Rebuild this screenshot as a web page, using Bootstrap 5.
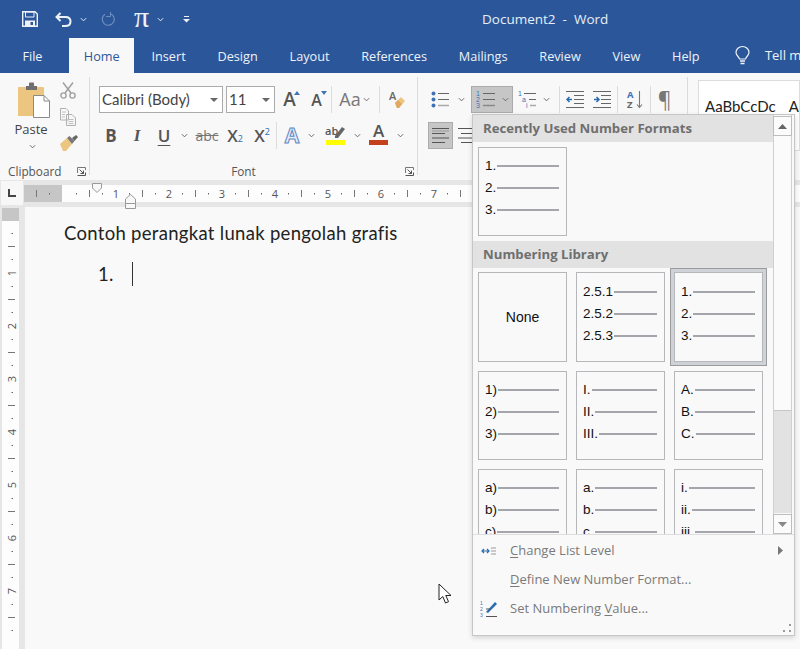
<!doctype html>
<html lang="en">
<head>
<meta charset="utf-8">
<title>Document2 - Word</title>
<link rel="stylesheet" href="https://cdn.jsdelivr.net/npm/bootstrap@5.3.0/dist/css/bootstrap.min.css">
<style>
html,body{height:649px;overflow:hidden}
body{background:#f9f9f9;font-family:"Open Sans","Noto Sans",sans-serif;font-size:13px;color:#444;position:relative}
svg{display:block;flex:none;overflow:visible}
.title-bar{height:38px;background:#2b579a;color:#e8eef7;padding-left:22px}
.q1{margin-left:17px}.q2{margin-left:8px}.q3{margin-left:14px}.q4{margin-left:19px;width:15px}.q5{margin-left:8px}.q6{margin-left:19px}
.pi{font:30px/1 "Liberation Serif",serif;color:#eef2f8;margin-top:-5px}
.doc-title{margin-left:292px;font-size:13.5px;white-space:pre}
.tab-bar{height:35px;background:#2b579a;padding-left:8px;gap:3px}
.tab-bar .nav-link{height:35px;padding:0 14.4px;color:#eef2f8;font-size:12.7px;line-height:36px;white-space:nowrap}
.tab-bar .nav-link.active{background:#f8f8f8;color:#2b579a}
.tab-bar .file-tab{margin-right:9.6px}
.tell{color:#eef2f8;white-space:nowrap;font-size:13px;margin-left:18px;gap:15px}
.ribbon{height:107px;background:#f8f8f8;padding-top:4px}
.grp{height:98px;border-right:1px solid #dcdcdc;position:relative;flex:none}
.g-clip{width:90px}.g-font{width:328px;padding-left:9px}.g-para{width:270px}
.grp-label{position:absolute;left:0;right:0;top:86px;line-height:16px;font-size:11.8px;color:#555;text-align:center}
.g-font .grp-label{padding-right:20px}
.launch{position:absolute;top:90px;right:3px}
.paste-col{padding:5px 0 0 18px;width:60px}
.paste-label{margin:2px 0 0 -6px;width:38px;text-align:center;font-size:13px;line-height:18px;color:#444}
.paste-chev{margin:6px 0 0 11px}
.clip-col{padding-top:5px;width:22px;gap:9px}
.row-a{height:27px;margin-top:9px}
.row-b{height:27px;margin-top:9px}
.sel-font,.sel-size{height:27px;border:1px solid #ababab;border-radius:0;background:#fff;padding:0 4px 0 2px;font:15px/25px "Lato",sans-serif;color:#444;flex:none;justify-content:space-between}
.sel-font{width:124px}.sel-size{width:49px;margin-left:3px}
.tri{width:0;height:0;border:4px solid transparent;border-top-color:#666;border-bottom:0}
.vsep{width:1px;height:27px;background:#dcdcdc;flex:none}
.cell{display:flex;align-items:center;justify-content:center;height:27px;flex:none;position:relative;color:#555}
.grow{width:15px;margin-left:7px;font-size:19px;font-weight:600}
.shrink{width:15px;margin-left:12px;font-size:16px;font-weight:600}
.gs-tri{position:absolute;top:5px;right:-3px}
.ms7{margin-left:7px}.ms8{margin-left:8px}.ms10{margin-left:10px}.ms6{margin-left:6px}.ms5{margin-left:5px}.ms3{margin-left:3px}.ms2{margin-left:2px}.ms4{margin-left:4px}.ms9{margin-left:9px}
.aa{width:22px;font-size:18px;color:#777}
.w13{width:24px}.f-b{font-size:17px;font-weight:700}.f-i{font-size:17px;font-style:italic;font-weight:600;font-family:"Liberation Serif",serif}
.f-u{font-size:17px;font-weight:600;text-decoration:underline;text-underline-offset:3px}
.f-s{font-size:14px;color:#777;text-decoration:line-through}
.f-x{font-size:17px;font-weight:600}
.f-x small{font-size:9px;color:#2b6cb0;font-weight:400}
.sub{align-self:flex-end;margin-bottom:4px}.sup{align-self:flex-start;margin-top:3px}
.a-fx{width:20px;font-size:21px;font-weight:700;color:#e8eef8;-webkit-text-stroke:1px #5d87c4}
.a-col{width:21px;flex-direction:column;justify-content:flex-start}
.a-col b{font-size:17px;font-weight:600;line-height:18px;height:18px;color:#555}
.a-col .ab{font-size:11px;line-height:18px;height:18px;color:#555;align-self:flex-start;font-weight:600}
.bar{height:5px;width:19px;flex:none}
.b-y{background:#ffff00}.b-r{background:#c5411c}
.pen{position:absolute;top:4px;right:0}
.btn-on{background:#c6c6c6;border:1px solid #ababab;height:27px;flex:none;display:flex;align-items:center}
.num-btn{width:42px;padding-left:4px;gap:5px;margin-left:6px}
.align-btn{width:25px;justify-content:center;margin-left:10px}
.pil{width:13px;font-size:21px;color:#777}
.para-top{padding-left:13px}
.styles-box{margin:3px 0 0 10px;width:110px;height:71px;background:#fff;border:1px solid #dcdcdc;padding:15px 0 0 6px;font:15px/20px "Lato",sans-serif;color:#222;white-space:nowrap;overflow:hidden}
.styles-box span{margin-right:13px}
.ruler-bar{height:27px;background:#e6e6e6}
.l-box{width:24px;height:27px;padding:1px 1px 2px 1px}
.l-in{background:#f7f7f7;height:24px;display:flex;align-items:center;justify-content:center;width:22px}
.ruler-svg text,.vruler text{font:11px "Open Sans",sans-serif;fill:#555}
.vruler{background:#e6e6e6;width:25px;height:442px;flex:none}
.page{padding:14px 0 0 39px;font-family:"Lato",sans-serif;font-size:18.5px;letter-spacing:.3px;color:#222;flex:1}
.page-line{line-height:24px}
.page-list{margin:17px 0 0 34px;height:24px;line-height:24px;gap:18px}
.caret-bar{width:1px;height:24px;background:#333;flex:none}
.pointer{position:absolute;left:438px;top:583px;z-index:1100}
.dropdown-menu.num-menu{top:114px;left:472px;width:323px;height:522px;padding:0;border:1px solid #c6c6c6;border-radius:0;background:#f9f9f9;box-shadow:0 2px 5px rgba(0,0,0,.15);font-size:13px;min-width:0;margin:0}
.gal-wrap{height:419px;overflow:hidden}
.gal{width:300px;flex:none}
.gal .dropdown-header{background:#e2e2e2;color:#6f6f6f;font-weight:700;font-size:13.2px;line-height:27px;height:27px;padding:0 0 0 10px;white-space:nowrap}
.gal-grid{display:grid;grid-template-columns:repeat(3,89px);gap:9px;padding:5px 0 5px 5px}
.gal-grid.lib{padding-top:4px}
.gi{height:89px;border:1px solid #b5b7bb;padding:7px 7px 0 6px;font:13.5px/22px "Liberation Sans",sans-serif;color:#111}
.lib .gi:nth-child(-n+3){height:90px;padding-top:8px}
.gi-r{height:22px;display:flex;align-items:center;gap:1px;white-space:nowrap}
.gi-r i{flex:1;height:2px;background:#a4a6ab;display:block}
.lib .gi.gi-none{font-size:14px;display:flex;align-items:center;justify-content:center;padding:0}
.gi-sel{box-shadow:0 0 0 3px #cfd2d6,0 0 0 4px #9c9c9c}
.sb{width:19px;flex:none;border-left:1px solid #d0d0d0;border-right:1px solid #d0d0d0}
.sb-btn{height:20px;background:#fbfbfb;border:1px solid #bdbdbd;margin:1px -1px 0;display:flex;align-items:center;justify-content:center;flex:none}
.sb-thumb{height:275px;flex:none;border-bottom:1px solid #c6c6c6;background:#fbfbfb}
.sb-track{flex:1;background:#e2e2e2}
.menu-list{border-top:1px solid #dedede;padding-top:1px}
.num-menu .dropdown-item{height:29px;padding:0;color:#7a7a7a;font-size:13px;display:flex;align-items:center}
.mi-ic{width:37px;display:flex;justify-content:center;flex:none;padding-right:6px}
.num-menu u{text-underline-offset:2px}
.mi-arrow{margin-left:auto;margin-right:11px}
.grip{position:absolute;right:3px;bottom:3px}
</style>
</head>
<body>
<svg width="0" height="0" class="position-absolute">
<symbol id="chev" viewBox="0 0 8 5"><path d="M1 1l3 3 3-3" fill="none" stroke="#666" stroke-width="1.1"/></symbol>
<symbol id="lnch" viewBox="0 0 9 9"><path d="M.5 6V.5H8.5V3" fill="none" stroke="#777"/><path d="M.5 8.5H8.5V5.5M2.5 2.5l4 4M6.5 3.5v3h-3" fill="none" stroke="#555"/></symbol>
</svg>

<header class="title-bar d-flex align-items-center">
<svg width="16" height="16" viewBox="0 0 16 16"><path d="M.7.7H13L15.3 3V15.3H.7Z" fill="none" stroke="#eef2f8" stroke-width="1.4"/><path d="M3.500 1H12V6H3.500Z" fill="none" stroke="#eef2f8"/><path d="M3 9.500H13V15H3Z" fill="#eef2f8"/><path d="M8.500 11H11V14H8.500Z" fill="#2b579a"/></svg>
<svg class="q1" width="17" height="15" viewBox="0 0 17 15"><path d="M5.500 1 1.500 5l4 4" fill="none" stroke="#eef2f8" stroke-width="2"/><path d="M2 5H10.500C14 5 15.500 7 15.500 9.500S13.500 14 10 14H7" fill="none" stroke="#eef2f8" stroke-width="2"/></svg>
<svg class="q2" width="7" height="5" viewBox="0 0 8 5"><path d="M1 1l3 3 3-3" fill="none" stroke="#eef2f8" stroke-width="1.1"/></svg>
<svg class="q3" width="14" height="14" viewBox="0 0 14 14"><path d="M9 1.500A6 6 0 1 1 4 2.200" fill="none" stroke="#6d8dbd" stroke-width="1.2"/><path d="M9.500 0v4.500H5" fill="none" stroke="#6d8dbd"/></svg>
<div class="pi q4">π</div>
<svg class="q5" width="7" height="5" viewBox="0 0 8 5"><path d="M1 1l3 3 3-3" fill="none" stroke="#eef2f8" stroke-width="1.1"/></svg>
<svg class="q6" width="7" height="7" viewBox="0 0 7 7"><path d="M1 .5H6" stroke="#eef2f8"/><path d="M0 3H7L3.500 6.500Z" fill="#eef2f8"/></svg>
<div class="doc-title">Document2  -  Word</div>
</header>

<ul class="nav tab-bar flex-nowrap overflow-hidden">
<li class="nav-item file-tab"><a class="nav-link" href="#">File</a></li>
<li class="nav-item"><a class="nav-link active" href="#">Home</a></li>
<li class="nav-item"><a class="nav-link" href="#">Insert</a></li>
<li class="nav-item"><a class="nav-link" href="#">Design</a></li>
<li class="nav-item"><a class="nav-link" href="#">Layout</a></li>
<li class="nav-item"><a class="nav-link" href="#">References</a></li>
<li class="nav-item"><a class="nav-link" href="#">Mailings</a></li>
<li class="nav-item"><a class="nav-link" href="#">Review</a></li>
<li class="nav-item"><a class="nav-link" href="#">View</a></li>
<li class="nav-item"><a class="nav-link" href="#">Help</a></li>
<li class="nav-item tell d-flex align-items-center">
<svg width="15" height="19" viewBox="0 0 15 19"><path d="M4.500 13C4 10.500 1 9.500 1 6.500A6.500 6 0 0 1 14 6.500C14 9.500 11 10.500 10.500 13Z" fill="none" stroke="#eef2f8" stroke-width="1.2"/><path d="M5 15H10M5.500 17.500H9.500" stroke="#eef2f8" stroke-width="1.300"/></svg>
<span>Tell me</span></li>
</ul>

<section class="ribbon d-flex">
<div class="grp g-clip d-flex">
<div class="paste-col">
<svg width="32" height="36" viewBox="0 0 32 36"><rect y="5" width="26" height="29" rx="1" fill="#ecc680"/><path d="M8 4H11V1.500A1 1 0 0 1 12 .5H15A1 1 0 0 1 16 1.500V4H19V8H8Z" fill="#6f6f6f"/><path d="M15.500 13.500H26L31.500 19V35.500H15.500Z" fill="#fff" stroke="#8a8a8a"/><path d="M26 13.500V19H31.500" fill="none" stroke="#8a8a8a"/></svg>
<div class="paste-label">Paste</div>
<svg class="paste-chev" width="7" height="5"><use href="#chev"/></svg>
</div>
<div class="clip-col d-flex flex-column">
<svg width="16" height="17" viewBox="0 0 16 17"><path d="M3 .5 11 11M13 .5 5 11" stroke="#a0a0a0" stroke-width="1.500"/><circle cx="3.500" cy="13.500" r="2.600" fill="none" stroke="#a0a0a0" stroke-width="1.400"/><circle cx="12.500" cy="13.500" r="2.600" fill="none" stroke="#a0a0a0" stroke-width="1.400"/></svg>
<svg width="16" height="18" viewBox="0 0 16 18"><path d="M.5.500H6L8.500 3V12H.5ZM6.500 6.500H12L15.500 10V17.500H6.500Z" fill="#f8f8f8" stroke="#b0b0b0"/><path d="M2 4H6M2 6.500H5M2 9H5M8.500 11.500H13.500M8.500 13.500H13.500M8.500 15.500H13.500" stroke="#c0c0c0"/></svg>
<svg width="18" height="16" viewBox="0 0 18 16"><path d="M0 9 7 3 12 9 6 16H3Z" fill="#ecc680"/><path d="M7 3 9.500 1 14.500 6 12 9Z" fill="#777"/><path d="M12 3 16 0 18 2 14.500 6Z" fill="#666"/></svg>
</div>
<div class="grp-label text-start ps-2">Clipboard</div>
<svg class="launch" width="9" height="9"><use href="#lnch"/></svg>
</div>

<div class="grp g-font">
<div class="row-a d-flex">
<div class="sel-font d-flex align-items-center"><span>Calibri (Body)</span><span class="tri"></span></div>
<div class="sel-size d-flex align-items-center"><span>11</span><span class="tri"></span></div>
<div class="cell grow">A<svg class="gs-tri" width="6" height="4"><path d="M0 4H6L3 0Z" fill="#3f73b5"/></svg></div>
<div class="cell shrink">A<svg class="gs-tri" width="6" height="4"><path d="M0 0H6L3 4Z" fill="#3f73b5"/></svg></div>
<div class="vsep ms7"></div>
<div class="cell aa ms7">Aa</div>
<svg class="ms2 align-self-center" width="7" height="5"><use href="#chev"/></svg>
<div class="vsep ms9"></div>
<div class="cell ms9"><svg width="16" height="19" viewBox="0 0 16 19"><text x="0" y="10" font-size="11" font-weight="600" fill="#666" font-family="Open Sans">A</text><path d="M6 13 12 7 16 11 10 18H8Z" fill="#ecc680"/><path d="M6 13 9 10 13 14 10 18H8Z" fill="#e0a860"/></svg></div>
</div>
<div class="row-b d-flex">
<div class="cell w13 f-b">B</div>
<div class="cell w13 ms2 f-i">I</div>
<div class="cell w13 ms3 f-u">U</div>
<svg class="ms5 align-self-center" width="7" height="5"><use href="#chev"/></svg>
<div class="cell w13 ms7 f-s">abc</div>
<div class="cell w13 ms4 f-x">X<small class="sub">2</small></div>
<div class="cell w13 ms3 f-x">X<small class="sup">2</small></div>
<div class="vsep ms2"></div>
<div class="cell a-fx ms5">A</div>
<svg class="ms6 align-self-center" width="7" height="5"><use href="#chev"/></svg>
<div class="cell a-col ms10"><span class="ab">ab</span><svg class="pen" width="11" height="12" viewBox="0 0 11 12"><path d="M0 10 7 1 10 3 3 12H0Z" fill="#666"/></svg><span class="bar b-y"></span></div>
<svg class="ms8 align-self-center" width="7" height="5"><use href="#chev"/></svg>
<div class="cell a-col ms7"><b>A</b><span class="bar b-r"></span></div>
<svg class="ms8 align-self-center" width="7" height="5"><use href="#chev"/></svg>
</div>
<div class="grp-label">Font</div>
<svg class="launch" width="9" height="9"><use href="#lnch"/></svg>
</div>

<div class="grp g-para">
<div class="row-a d-flex align-items-center para-top">
<svg width="19" height="17" viewBox="0 0 19 17"><circle cx="2.500" cy="2.500" r="2" fill="#3f73b5"/><circle cx="2.500" cy="8.500" r="2" fill="#3f73b5"/><circle cx="2.500" cy="14.500" r="2" fill="#3f73b5"/><path d="M7 2.500H18M7 8.500H18" stroke="#666"/><path d="M7 14.500H18" stroke="#aaa" stroke-width="1.500"/></svg>
<svg class="ms8" width="7" height="5"><use href="#chev"/></svg>
<div class="btn-on num-btn"><svg width="21" height="19" viewBox="0 0 21 19"><text x="0" y="6" font-size="7" fill="#3f73b5" font-family="Liberation Sans">1</text><text x="0" y="12" font-size="7" fill="#3f73b5" font-family="Liberation Sans">2</text><text x="0" y="18" font-size="7" fill="#3f73b5" font-family="Liberation Sans">3</text><path d="M7 3.500H19M7 9.500H19" stroke="#666"/><path d="M7 15.500H19" stroke="#888" stroke-width="1.500"/></svg><svg width="7" height="5"><use href="#chev"/></svg></div>
<svg class="ms5" width="19" height="19" viewBox="0 0 19 19"><text x="0" y="6" font-size="7" fill="#3f73b5" font-family="Liberation Sans">1</text><text x="4" y="12" font-size="7" fill="#3f73b5" font-family="Liberation Sans">a</text><text x="8" y="18" font-size="7" fill="#3f73b5" font-family="Liberation Sans">i</text><path d="M6 3.500H18M11 9.500H18" stroke="#666"/><path d="M12 15.500H18" stroke="#aaa" stroke-width="1.500"/></svg>
<svg class="ms6" width="7" height="5"><use href="#chev"/></svg>
<div class="vsep ms9"></div>
<svg class="ms6" width="18" height="17" viewBox="0 0 18 17"><path d="M0 .5H18M8 4.500H18M8 8.500H18M8 12.500H18M0 16.500H18" stroke="#666"/><path d="M6 8.500H1M3.500 6 1 8.500 3.500 11" fill="none" stroke="#2b6cb0" stroke-width="1.500"/></svg>
<svg class="ms9" width="18" height="17" viewBox="0 0 18 17"><path d="M0 .5H18M8 4.500H18M8 8.500H18M8 12.500H18M0 16.500H18" stroke="#666"/><path d="M1 8.500H6M3.500 6 6 8.500 3.500 11" fill="none" stroke="#2b6cb0" stroke-width="1.500"/></svg>
<div class="vsep ms6"></div>
<svg class="ms9" width="16" height="19" viewBox="0 0 16 19"><text x="0" y="8" font-size="9.500" font-weight="700" fill="#3f73b5" font-family="Open Sans">A</text><text x="0" y="18" font-size="9.500" font-weight="700" fill="#666" font-family="Open Sans">Z</text><path d="M12.500 1V17M10 14.500 12.500 17.500 15 14.500" fill="none" stroke="#777" stroke-width="1.100"/></svg>
<div class="vsep ms7"></div>
<div class="cell pil ms7">¶</div>
</div>
<div class="row-b d-flex align-items-center">
<div class="btn-on align-btn"><svg width="17" height="17" viewBox="0 0 17 17"><path d="M0 1.500H17M0 6.500H13M0 11H17M0 15.500H13" stroke="#555" stroke-width="1.200"/><path d="M0 4H17" stroke="#999"/></svg></div>
<svg class="ms5" width="17" height="17" viewBox="0 0 17 17"><path d="M0 1.500H17M3 6.500H14M0 11H17M3 15.500H14" stroke="#555" stroke-width="1.200"/></svg>
</div>
</div>

<div class="styles-box"><span>AaBbCcDc</span><span>AaBbCcDc</span></div>
</section>

<section class="ruler-bar d-flex">
<div class="l-box"><div class="l-in"><svg width="8" height="8" viewBox="0 0 8 8"><path d="M0 0H2V6H8V8H0Z" fill="#444"/></svg></div></div>
<svg class="ruler-svg" width="776" height="27" viewBox="24 0 776 27">
<rect x="24" y="5" width="38" height="17" fill="#c6c6c6"/><rect x="62" y="5" width="738" height="17" fill="#fdfdfd"/>
<path d="M36.500 10v7M89.500 10v7M142.500 10v7M195.500 10v7M248.500 10v7M301.500 10v7M354.500 10v7M407.500 10v7M460.500 10v7" stroke="#777"/>
<path d="M49.500 13v1.500M76.500 13v1.500M102.500 13v1.500M129.500 13v1.500M155.500 13v1.500M182.500 13v1.500M208.500 13v1.500M235.500 13v1.500M261.500 13v1.500M288.500 13v1.500M314.500 13v1.500M341.500 13v1.500M367.500 13v1.500M394.500 13v1.500M420.500 13v1.500M447.500 13v1.500" stroke="#666"/>
<text x="116" y="18" text-anchor="middle">1</text><text x="169" y="18" text-anchor="middle">2</text><text x="222" y="18" text-anchor="middle">3</text><text x="275" y="18" text-anchor="middle">4</text><text x="328" y="18" text-anchor="middle">5</text><text x="381" y="18" text-anchor="middle">6</text><text x="434" y="18" text-anchor="middle">7</text>
<path d="M92.500 3.500H101.500V8L97 12.500 92.500 8Z" fill="#f8f8f8" stroke="#999"/>
<path d="M130.500 14.500 135.500 19V23.500H125.500V19Z" fill="#f8f8f8" stroke="#999"/><path d="M125.500 23.500H135.500V28.500H125.500Z" fill="#f8f8f8" stroke="#999"/>
</svg>
</section>

<main class="d-flex">
<svg class="vruler" width="25" height="442" viewBox="0 207 25 442">
<rect x="2" y="208" width="17" height="13" fill="#c6c6c6"/><rect x="2" y="221" width="17" height="428" fill="#fdfdfd"/>
<path d="M8 246.500h7M8 299.500h7M8 352.500h7M8 405.500h7M8 458.500h7M8 511.500h7M8 564.500h7M8 617.500h7" stroke="#777"/>
<path d="M11.500 233.500h1.500M11.500 259.500h1.500M11.500 286.500h1.500M11.500 312.500h1.500M11.500 339.500h1.500M11.500 365.500h1.500M11.500 392.500h1.500M11.500 418.500h1.500M11.500 445.500h1.500M11.500 471.500h1.500M11.500 498.500h1.500M11.500 524.500h1.500M11.500 551.500h1.500M11.500 577.500h1.500M11.500 604.500h1.500M11.500 630.500h1.500" stroke="#666"/>
<text transform="rotate(-90 16 273)" x="16" y="273" text-anchor="middle">1</text><text transform="rotate(-90 16 326)" x="16" y="326" text-anchor="middle">2</text><text transform="rotate(-90 16 379)" x="16" y="379" text-anchor="middle">3</text><text transform="rotate(-90 16 432)" x="16" y="432" text-anchor="middle">4</text><text transform="rotate(-90 16 485)" x="16" y="485" text-anchor="middle">5</text><text transform="rotate(-90 16 538)" x="16" y="538" text-anchor="middle">6</text><text transform="rotate(-90 16 591)" x="16" y="591" text-anchor="middle">7</text>
</svg>
<div class="page">
<div class="page-line">Contoh perangkat lunak pengolah grafis</div>
<div class="page-list d-flex"><span>1.</span><span class="caret-bar"></span></div>
</div>
</main>

<div class="dropdown-menu show num-menu">
<div class="gal-wrap d-flex">
<div class="gal">
<h6 class="dropdown-header">Recently Used Number Formats</h6>
<div class="gal-grid">
<div class="gi"><div class="gi-r">1.<i></i></div><div class="gi-r">2.<i></i></div><div class="gi-r">3.<i></i></div></div>
</div>
<h6 class="dropdown-header">Numbering Library</h6>
<div class="gal-grid lib">
<div class="gi gi-none">None</div>
<div class="gi"><div class="gi-r">2.5.1<i></i></div><div class="gi-r">2.5.2<i></i></div><div class="gi-r">2.5.3<i></i></div></div>
<div class="gi gi-sel"><div class="gi-r">1.<i></i></div><div class="gi-r">2.<i></i></div><div class="gi-r">3.<i></i></div></div>
<div class="gi"><div class="gi-r">1)<i></i></div><div class="gi-r">2)<i></i></div><div class="gi-r">3)<i></i></div></div>
<div class="gi"><div class="gi-r">I.<i></i></div><div class="gi-r">II.<i></i></div><div class="gi-r">III.<i></i></div></div>
<div class="gi"><div class="gi-r">A.<i></i></div><div class="gi-r">B.<i></i></div><div class="gi-r">C.<i></i></div></div>
<div class="gi"><div class="gi-r">a)<i></i></div><div class="gi-r">b)<i></i></div><div class="gi-r">c)<i></i></div></div>
<div class="gi"><div class="gi-r">a.<i></i></div><div class="gi-r">b.<i></i></div><div class="gi-r">c.<i></i></div></div>
<div class="gi"><div class="gi-r">i.<i></i></div><div class="gi-r">ii.<i></i></div><div class="gi-r">iii.<i></i></div></div>
</div>
</div>
<div class="sb d-flex flex-column">
<div class="sb-btn"><svg width="9" height="5"><path d="M0 5H9L4.500 0Z" fill="#666"/></svg></div>
<div class="sb-thumb"></div>
<div class="sb-track"></div>
<div class="sb-btn"><svg width="9" height="5"><path d="M0 0H9L4.500 5Z" fill="#888"/></svg></div>
</div>
</div>
<div class="menu-list">
<a class="dropdown-item" href="#"><span class="mi-ic"><svg width="14" height="8" viewBox="0 0 14 8"><path d="M9 1H14M9 4H14M9 7H14" stroke="#999"/><path d="M0 4H7M2 2 0 4 2 6M5 2 7 4 5 6" fill="none" stroke="#2b6cb0" stroke-width="1.200"/></svg></span><span><u>C</u>hange List Level</span><svg class="mi-arrow" width="5" height="9"><path d="M0 0V9L5 4.500Z" fill="#777"/></svg></a>
<a class="dropdown-item" href="#"><span class="mi-ic"></span><span><u>D</u>efine New Number Format...</span></a>
<a class="dropdown-item" href="#"><span class="mi-ic"><svg width="18" height="18" viewBox="0 0 18 18"><text x="0" y="5" font-size="5" fill="#3f73b5" font-family="Liberation Sans">1</text><text x="0" y="11" font-size="5" fill="#3f73b5" font-family="Liberation Sans">2</text><text x="0" y="17" font-size="5" fill="#3f73b5" font-family="Liberation Sans">3</text><path d="M6 12 15 2 17 4 8 13Z" fill="#2b6cb0"/><path d="M6 16.500H17M6 9H10" stroke="#555"/></svg></span><span>Set Numbering <u>V</u>alue...</span></a>
</div>
<svg class="grip" width="8" height="8"><path d="M6 0h2v2H6zM6 6h2v2H6zM0 6h2v2H0z" fill="#999"/></svg>
</div>

<svg class="pointer" width="16" height="22" viewBox="0 0 16 22"><path d="M1 1V17L4.800 13.500 7.500 20 10.500 18.700 7.800 12.500H13Z" fill="#fff" stroke="#222" stroke-width="1"/></svg>

<script src="https://cdn.jsdelivr.net/npm/bootstrap@5.3.0/dist/js/bootstrap.bundle.min.js"></script>
</body>
</html>
